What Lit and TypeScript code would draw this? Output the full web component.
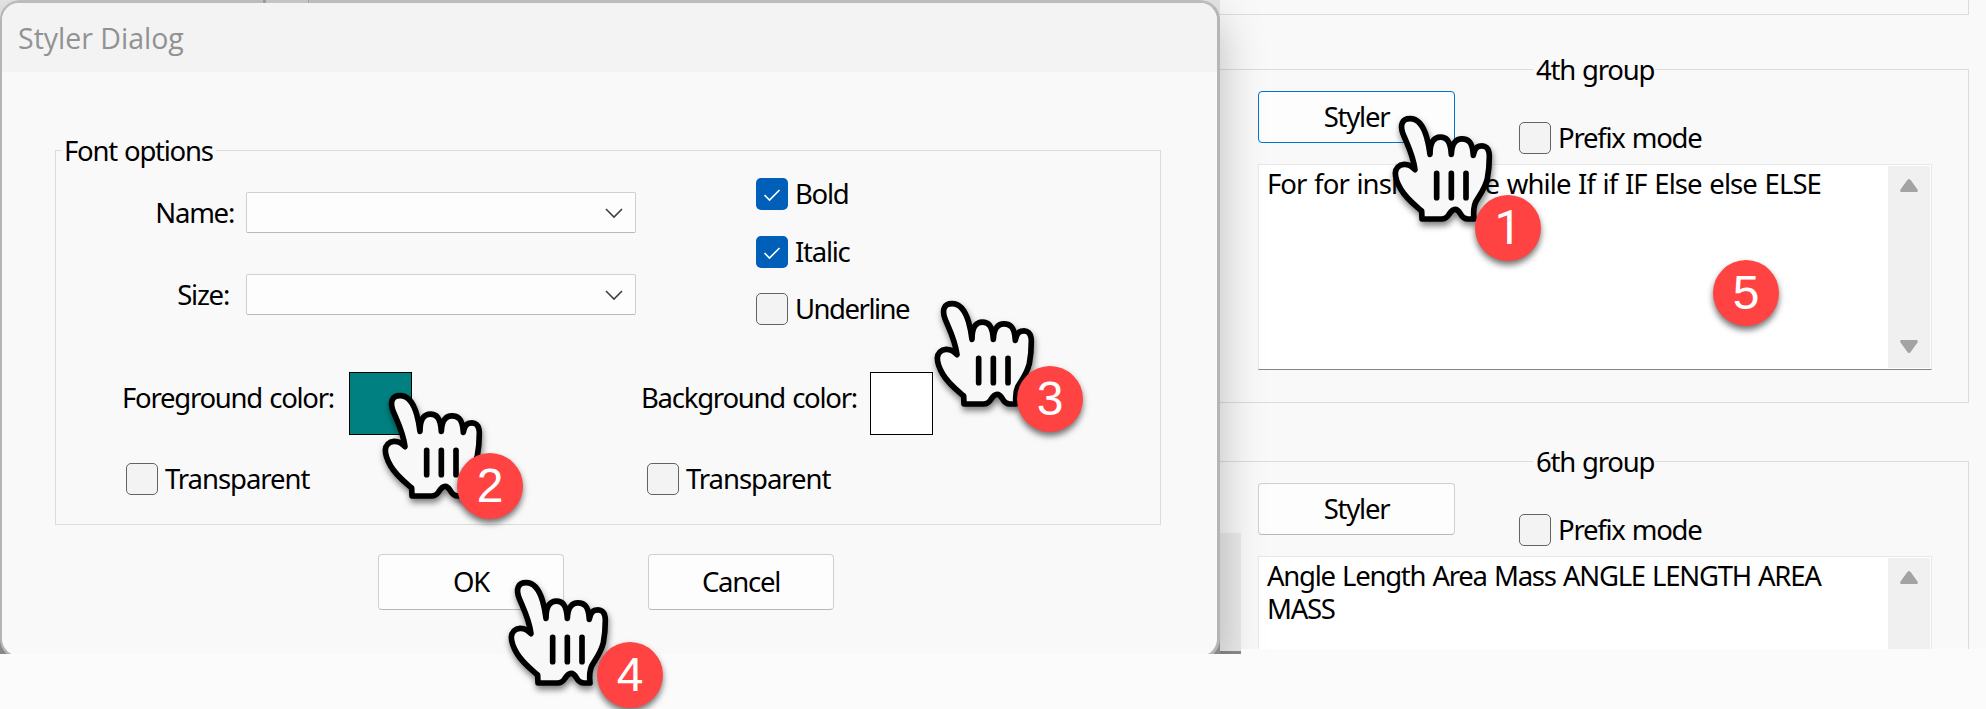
import { LitElement, html, css, svg } from "lit";
import { customElement, property } from "lit/decorators.js";
import { classMap } from "lit/directives/class-map.js";

@customElement("check-box")
class CheckBox extends LitElement {
  @property() label = "";
  @property({ type: Boolean }) checked = false;
  static styles = css`
    :host { display: flex; align-items: center; height: 32px; white-space: nowrap; }
    .box { box-sizing: border-box; width: 32px; height: 32px; border: 1.5px solid #636363; border-radius: 5px; background: #f3f3f3; }
    .on { border: 0; background: #005fb8; }
    .label { margin-left: 7px; }
    svg { display: block; }
  `;
  render() {
    return html`<div class=${classMap({ box: true, on: this.checked })}>
        ${this.checked
          ? html`<svg width="32" height="32" viewBox="0 0 32 32"><path d="M8.5 17L13.5 22L23.5 12" fill="none" stroke="#fff" stroke-width="1.6"/></svg>`
          : ""}
      </div><span class="label">${this.label}</span>`;
  }
}

@customElement("combo-box")
class ComboBox extends LitElement {
  static styles = css`
    :host { display: flex; box-sizing: border-box; width: 390px; height: 41px; border: 1px solid #d0d0d0; border-bottom-color: #b8b8b8; border-radius: 2px; background: #fdfdfd; justify-content: flex-end; align-items: center; padding-right: 12px; }
  `;
  render() {
    return html`<svg width="18" height="12" viewBox="0 0 18 12"><path d="M1 2L9 10L17 2" fill="none" stroke="#404040" stroke-width="1.6"/></svg>`;
  }
}

@customElement("push-button")
class PushButton extends LitElement {
  @property({ type: Boolean, reflect: true }) focused = false;
  static styles = css`
    :host { display: flex; box-sizing: border-box; align-items: center; justify-content: center; border: 1px solid #d0d0d0; border-bottom-color: #b8b8b8; border-radius: 4px; background: #fdfdfd; white-space: nowrap; }
    :host([focused]) { border-color: #0074cc; }
  `;
  render() {
    return html`<slot></slot>`;
  }
}

@customElement("keyword-group")
class KeywordGroup extends LitElement {
  @property() heading = "";
  @property() words = "";
  @property({ type: Boolean }) focused = false;
  static styles = css`
    :host { display: block; box-sizing: border-box; height: 334px; border: 1px solid #dcdcdc; border-left: 0; }
    .legend { display: flex; width: max-content; height: 34px; margin: -17px 0 0 313px; padding: 0 1px 0 3px; align-items: center; background: #f9f9f9; white-space: nowrap; }
    .row { display: flex; margin: 4px 0 0 38px; align-items: flex-start; }
    push-button { width: 197px; height: 52px; }
    check-box { margin: 31px 0 0 64px; }
    .area { display: flex; box-sizing: border-box; width: 674px; height: 206px; margin: 10px 0 0 38px; border: 1px solid #e8e8e8; border-bottom-color: #858585; background: #fff; padding: 1px 0; }
    .words { flex: 1; padding: 1px 20px 0 8px; line-height: 33px; }
    .loose { letter-spacing: -0.9px; }
    .bar { display: flex; flex-direction: column; justify-content: space-between; align-items: center; width: 42px; margin-right: 1px; padding: 12px 0 14px; box-sizing: border-box; background: #f0f0f0; }
  `;
  render() {
    const arrow = svg`<path d="M9 1Q10 1 11 2.5L17.5 11.5Q18.5 14 16.5 14H1.5Q-.5 14 .5 11.5L7 2.5Q8 1 9 1Z" fill="#a3a3a3"/>`;
    return html`
      <div class="legend">${this.heading}</div>
      <div class="row">
        <push-button ?focused=${this.focused}>Styler</push-button>
        <check-box label="Prefix mode"></check-box>
      </div>
      <div class="area">
        <div class=${classMap({ words: true, loose: this.focused })}>${this.words}</div>
        <div class="bar">
          <svg width="18" height="15" viewBox="0 0 18 15">${arrow}</svg>
          <svg width="18" height="15" viewBox="0 0 18 15"><g transform="rotate(180 9 7.5)">${arrow}</g></svg>
        </div>
      </div>`;
  }
}

@customElement("hand-pointer")
class HandPointer extends LitElement {
  static styles = css`
    :host { display: block; width: 110px; height: 120px; }
    svg { display: block; overflow: visible; filter: drop-shadow(1px 4px 3px rgba(0, 0, 0, 0.5)); }
  `;
  render() {
    return html`<svg width="110" height="120" viewBox="30 48 330 360">
      <path d="M105 209C99 165 85 140 70 104C58 73 67 56 90 56C119 56 132 84 140 112C146 133 148 147 150 163C150 142 153 130 160 121C170 109 191 108 202 120C210 130 213 146 214 163C215 145 218 133 225 126C235 114 256 114 267 124C276 133 279 149 280 166C283 150 287 142 297 139C316 133 328 145 328 169C328 194 326 216 322 236C314 268 300 283 287 306C280 321 280 338 282 357H264C252 357 247 352 241 341C236 332 231 328 225 328C219 328 213 334 207 343C201 353 196 357 184 357H126L125 333C102 313 78 295 62 267C51 248 46 232 46 219C47 204 57 194 72 193C87 192 96 199 105 209Z" fill="#f8f8f8" stroke="#000" stroke-width="17" stroke-linejoin="round"/>
      <path d="M170 220V293M214 220V293M258 220V293" stroke="#000" stroke-width="17" stroke-linecap="round"/>
    </svg>`;
  }
}

const hands = [
  { x: 1410, y: 116 },
  { x: 400, y: 393 },
  { x: 952, y: 301 },
  { x: 526, y: 580 },
];
const badges = [
  { n: 1, x: 1508, y: 228 },
  { n: 2, x: 490, y: 486 },
  { n: 3, x: 1050, y: 399 },
  { n: 4, x: 630, y: 675 },
  { n: 5, x: 1746, y: 293 },
];

@customElement("app-root")
class AppRoot extends LitElement {
  static styles = css`
    :host { display: block; position: relative; width: 1986px; height: 709px; overflow: hidden; background: #fbfbfb; color: #000; font: 27.5px/34px "Noto Sans", "Open Sans", sans-serif; letter-spacing: -1.25px; word-spacing: 1.3px; }
    .scene { display: flex; height: 654px; overflow: hidden; isolation: isolate; background: linear-gradient(#e8e8e8, #c4c4c4 80%, #999); clip-path: polygon(0 0, 100% 0, 100% 649px, 1241px 649px, 1241px 100%, 0 100%); }
    .dialog { position: relative; z-index: 1; flex: none; box-sizing: border-box; width: 1220px; height: 659px; border: solid #b5b5b5; border-width: 3px 3px 3px 2px; border-top-color: #bcbcbc; border-radius: 20px; background: #f9f9f9; box-shadow: 0 18px 46px rgba(0, 0, 0, 0.25); }
    .title { display: flex; align-items: center; height: 69px; padding-left: 16px; border-radius: 17px 17px 0 0; background: #f3f3f3; color: #929292; font-family: "Open Sans", sans-serif; font-size: 28.5px; letter-spacing: 0; word-spacing: 0; }
    .options { box-sizing: border-box; width: 1106px; height: 375px; margin: 78px 0 0 53px; border: 1px solid #dcdcdc; }
    .legend { width: max-content; height: 34px; margin: -17px 0 0 6px; padding: 0 3px 0 2px; background: #f9f9f9; }
    .top { display: flex; height: 171px; }
    .fields { display: grid; grid-template-columns: 178px 390px; column-gap: 12px; grid-auto-rows: 41px; row-gap: 41px; margin-top: 24px; align-items: center; }
    .fields span { text-align: right; }
    .fields .size { padding-right: 5px; }
    .checks { display: flex; flex-direction: column; margin: 10px 0 0 120px; }
    .checks .italic { margin: 26px 0 25px; }
    .colors { display: grid; grid-template-columns: 521px 500px; margin: 33px 0 0 66px; }
    .pick { display: flex; justify-content: space-between; height: 63px; }
    .pick span { margin-top: 9px; }
    .swatch { box-sizing: border-box; width: 63px; height: 63px; border: 1px solid #000; background: #fff; }
    .fg { width: 290px; }
    .bg { width: 292px; margin-left: -2px; }
    .teal { background: #008080; }
    .colors check-box { margin: 28px 0 0 4px; letter-spacing: -1.05px; }
    .under { letter-spacing: -1.5px; }
    .buttons { display: flex; gap: 84px; margin: 29px 0 0 376px; }
    .buttons push-button { width: 186px; height: 56px; }
    .panel { flex: 1; overflow: hidden; background: #f9f9f9; }
    .sheet { width: 749px; }
    .prev { box-sizing: border-box; height: 15px; border: 1px solid #dcdcdc; border-width: 0 1px 1px 0; margin-bottom: 54px; }
    .sheet keyword-group { margin-bottom: 58px; }
    .edge { position: absolute; left: 1220px; top: 533px; width: 21px; height: 121px; box-sizing: border-box; background: rgba(0, 0, 0, 0.055); border-bottom: 3px solid #8b8b89; }
    .seam { position: absolute; z-index: 2; left: 263px; top: 0; width: 46px; height: 3px; box-sizing: border-box; background: #c4c4c4; border-left: 3px solid #9c9c9c; border-right: 1px solid #a4a4a4; }
    .marks { position: absolute; inset: 0; z-index: 3; }
    .hand { position: absolute; }
    .badge { position: absolute; width: 66px; height: 66px; border-radius: 50%; background: #ff4343; color: #fff; font: 48px/66px "Liberation Sans", Arial, sans-serif; letter-spacing: 0; text-align: center; box-shadow: 0 4px 6px rgba(0, 0, 0, 0.55); }
    .first { font-family: Roboto, sans-serif; }
  `;
  render() {
    return html`
      <div class="scene">
        <div class="dialog">
          <div class="title">Styler Dialog</div>
          <div class="options">
            <div class="legend">Font options</div>
            <div class="top">
              <div class="fields">
                <span>Name:</span><combo-box></combo-box>
                <span class="size">Size:</span><combo-box></combo-box>
              </div>
              <div class="checks">
                <check-box label="Bold" checked></check-box>
                <check-box class="italic" label="Italic" checked></check-box>
                <check-box class="under" label="Underline"></check-box>
              </div>
            </div>
            <div class="colors">
              <div class="pick fg"><span>Foreground color:</span><div class="swatch teal"></div></div>
              <div class="pick bg"><span>Background color:</span><div class="swatch"></div></div>
              <check-box label="Transparent"></check-box>
              <check-box label="Transparent"></check-box>
            </div>
          </div>
          <div class="buttons">
            <push-button>OK</push-button>
            <push-button>Cancel</push-button>
          </div>
        </div>
        <div class="panel">
          <div class="sheet">
            <div class="prev"></div>
            <keyword-group heading="4th group" focused words="For for inside while while If if IF Else else ELSE"></keyword-group>
            <keyword-group heading="6th group" words="Angle Length Area Mass ANGLE LENGTH AREA MASS"></keyword-group>
          </div>
        </div>
        <div class="edge"></div>
        <div class="seam"></div>
      </div>
      <div class="marks">
        ${hands.map((h) => html`<hand-pointer class="hand" style="left:${h.x - 20}px;top:${h.y}px"></hand-pointer>`)}
        ${badges.map((b) => html`<div class=${classMap({ badge: true, first: b.n === 1 })} style="left:${b.x - 33}px;top:${b.y - 33}px">${b.n}</div>`)}
      </div>
    `;
  }
}
